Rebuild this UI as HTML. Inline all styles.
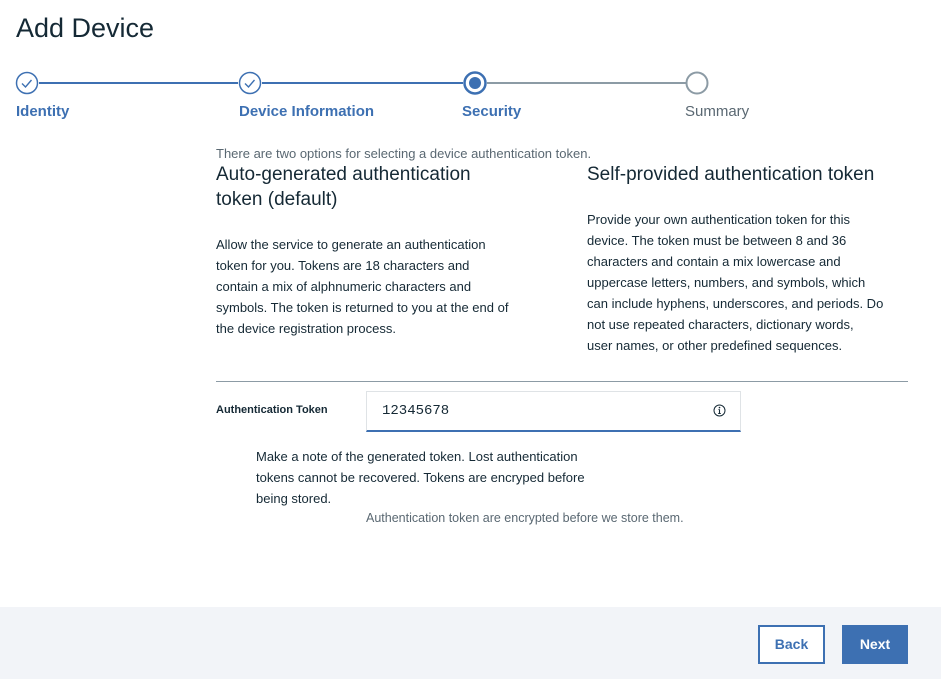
<!DOCTYPE html>
<html><head><meta charset="utf-8"><style>
*{margin:0;padding:0;box-sizing:border-box}
body{width:941px;height:679px;background:#fff;font-family:"Liberation Sans",sans-serif;color:#152935;position:relative;overflow:hidden}
.a{position:absolute;white-space:nowrap}
.p{font-size:13px;color:#152935;line-height:21px}
.lbl{font-size:15px;font-weight:bold;color:#3d70b2;top:103px}
</style></head><body>
<div class="a" style="left:16px;top:13px;font-size:27px;color:#152935">Add Device</div>
<svg class="a" style="left:0;top:60px" width="760" height="40">
<line x1="39" y1="23" x2="238" y2="23" stroke="#3d70b2" stroke-width="2"/>
<line x1="262" y1="23" x2="463" y2="23" stroke="#3d70b2" stroke-width="2"/>
<line x1="487" y1="23" x2="686" y2="23" stroke="#8c9ba5" stroke-width="2"/>
<circle cx="27" cy="23" r="10.5" fill="#fff" stroke="#3d70b2" stroke-width="1.5"/>
<path d="M22 23.5l3.5 3.5 6-7" fill="none" stroke="#3d70b2" stroke-width="1.4"/>
<circle cx="250" cy="23" r="10.5" fill="#fff" stroke="#3d70b2" stroke-width="1.5"/>
<path d="M245 23.5l3.5 3.5 6-7" fill="none" stroke="#3d70b2" stroke-width="1.4"/>
<circle cx="475" cy="23" r="10.5" fill="#fff" stroke="#3d70b2" stroke-width="2.5"/>
<circle cx="475" cy="23" r="6" fill="#3d70b2"/>
<circle cx="697" cy="23" r="10.5" fill="#fff" stroke="#8c9ba5" stroke-width="2"/>
</svg>
<div class="a lbl" style="left:16px">Identity</div>
<div class="a lbl" style="left:239px">Device Information</div>
<div class="a lbl" style="left:462px">Security</div>
<div class="a lbl" style="left:685px;font-weight:normal;color:#5a6872">Summary</div>
<div class="a" style="left:216px;top:146px;font-size:13px;color:#5a6872">There are two options for selecting a device authentication token.</div>
<div class="a" style="left:216px;top:162px;font-size:19px;line-height:25px">Auto-generated authentication<br>token (default)</div>
<div class="a" style="left:587px;top:162px;font-size:19px;line-height:25px">Self-provided authentication token</div>
<div class="a p" style="left:216px;top:234px">Allow the service to generate an authentication<br>token for you. Tokens are 18 characters and<br>contain a mix of alphnumeric characters and<br>symbols. The token is returned to you at the end of<br>the device registration process.</div>
<div class="a p" style="left:587px;top:209px">Provide your own authentication token for this<br>device. The token must be between 8 and 36<br>characters and contain a mix lowercase and<br>uppercase letters, numbers, and symbols, which<br>can include hyphens, underscores, and periods. Do<br>not use repeated characters, dictionary words,<br>user names, or other predefined sequences.</div>
<div class="a" style="left:216px;top:381px;width:692px;height:1px;background:#8c9ba5"></div>
<div class="a" style="left:216px;top:404px;font-size:11px;font-weight:bold">Authentication Token</div>
<div class="a" style="left:366px;top:391px;width:375px;height:41px;border:1px solid #dfe3e6;border-bottom:2px solid #3d70b2;background:#fff"></div>
<div class="a" style="left:382px;top:403px;font-size:14px;font-family:'Liberation Mono',monospace">12345678</div>
<svg class="a" style="left:713px;top:404px" width="13" height="13"><circle cx="6.5" cy="6.5" r="5.5" fill="none" stroke="#152935"/><path d="M6.5 5.5v4M5.2 9.5h2.6M5.5 5.5h1" stroke="#152935" stroke-width="1.1"/><circle cx="6.5" cy="3.6" r=".8" fill="#152935"/></svg>
<div class="a p" style="left:256px;top:446px">Make a note of the generated token. Lost authentication<br>tokens cannot be recovered. Tokens are encryped before<br>being stored.</div>
<div class="a" style="left:366px;top:511px;font-size:12.5px;color:#5a6872">Authentication token are encrypted before we store them.</div>
<div class="a" style="left:0;top:607px;width:941px;height:72px;background:#f2f4f8"></div>
<div class="a" style="left:758px;top:625px;width:67px;height:39px;border:2px solid #3d70b2;background:#fff;color:#3d70b2;font-size:14px;font-weight:bold;text-align:center;line-height:35px">Back</div>
<div class="a" style="left:842px;top:625px;width:66px;height:39px;background:#3d70b2;color:#fff;font-size:14px;font-weight:bold;text-align:center;line-height:39px">Next</div>
</body></html>
